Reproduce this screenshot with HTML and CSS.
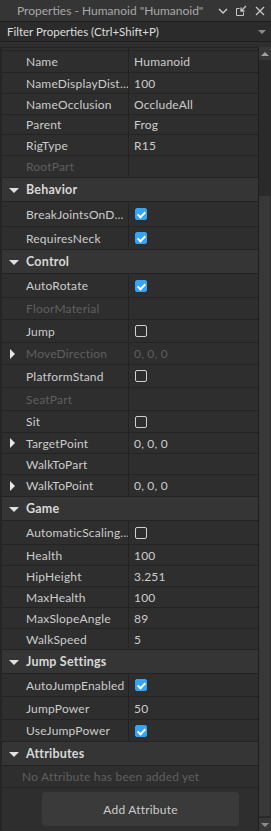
FILE: index.html
```html
<!DOCTYPE html>
<html lang="en">
<head>
    <meta charset="UTF-8">
    <title>Properties</title>
    <link rel="stylesheet" href="styles.css">
</head>
<body>
    <div class="panel">
        <div class="titlebar">
            <span class="title">Properties - Humanoid "Humanoid"</span>
            <div class="title-icons">
                <svg width="10" height="8" viewBox="0 0 10 8"><path d="M1 2 L5 6 L9 2" fill="none" stroke="#c8c8c8" stroke-width="1.5"/></svg>
                <svg width="11" height="11" viewBox="0 0 11 11"><path d="M0.5 3.5 H3.5 M0.5 3.5 V10.5 H7.5 V7.5" fill="none" stroke="#c8c8c8"/><path d="M10 1 L5 6 M5 2.5 V6 H8.5" fill="none" stroke="#c8c8c8" stroke-width="1.3"/></svg>
                <svg width="10" height="10" viewBox="0 0 10 10"><path d="M1 1 L9 9 M9 1 L1 9" fill="none" stroke="#c8c8c8" stroke-width="1.3"/></svg>
            </div>
        </div>
        <div class="filter">
            <span>Filter Properties (Ctrl+Shift+P)</span>
            <span class="tri-down small"></span>
        </div>
        <div class="content">
            <div class="grid">
                <div class="row strip"><div class="name"></div><div class="value"></div></div>
                <div class="row h22"><div class="name">Name</div><div class="value">Humanoid</div></div>
                <div class="row"><div class="name">NameDisplayDist...</div><div class="value">100</div></div>
                <div class="row"><div class="name">NameOcclusion</div><div class="value">OccludeAll</div></div>
                <div class="row h20"><div class="name">Parent</div><div class="value">Frog</div></div>
                <div class="row"><div class="name">RigType</div><div class="value">R15</div></div>
                <div class="row h22 off"><div class="name">RootPart</div><div class="value"></div></div>

                <div class="cat"><span class="tri-down"></span>Behavior</div>
                <div class="row h25"><div class="name">BreakJointsOnD...</div><div class="value"><span class="check on"></span></div></div>
                <div class="row h23"><div class="name">RequiresNeck</div><div class="value"><span class="check on"></span></div></div>

                <div class="cat h25"><span class="tri-down"></span>Control</div>
                <div class="row h24"><div class="name">AutoRotate</div><div class="value"><span class="check on"></span></div></div>
                <div class="row h22 off"><div class="name">FloorMaterial</div><div class="value"></div></div>
                <div class="row h23"><div class="name">Jump</div><div class="value"><span class="check"></span></div></div>
                <div class="row h22 off"><div class="name"><span class="tri-right"></span>MoveDirection</div><div class="value">0, 0, 0</div></div>
                <div class="row h23"><div class="name">PlatformStand</div><div class="value"><span class="check"></span></div></div>
                <div class="row h23 off"><div class="name">SeatPart</div><div class="value"></div></div>
                <div class="row h22"><div class="name">Sit</div><div class="value"><span class="check"></span></div></div>
                <div class="row"><div class="name"><span class="tri-right"></span>TargetPoint</div><div class="value">0, 0, 0</div></div>
                <div class="row"><div class="name">WalkToPart</div><div class="value"></div></div>
                <div class="row h22"><div class="name"><span class="tri-right"></span>WalkToPoint</div><div class="value">0, 0, 0</div></div>

                <div class="cat"><span class="tri-down"></span>Game</div>
                <div class="row h24"><div class="name">AutomaticScaling...</div><div class="value"><span class="check"></span></div></div>
                <div class="row"><div class="name">Health</div><div class="value">100</div></div>
                <div class="row"><div class="name">HipHeight</div><div class="value">3.251</div></div>
                <div class="row"><div class="name">MaxHealth</div><div class="value">100</div></div>
                <div class="row"><div class="name">MaxSlopeAngle</div><div class="value">89</div></div>
                <div class="row"><div class="name">WalkSpeed</div><div class="value">5</div></div>

                <div class="cat h25"><span class="tri-down"></span>Jump Settings</div>
                <div class="row h23"><div class="name">AutoJumpEnabled</div><div class="value"><span class="check on"></span></div></div>
                <div class="row h23"><div class="name">JumpPower</div><div class="value">50</div></div>
                <div class="row h22"><div class="name">UseJumpPower</div><div class="value"><span class="check on"></span></div></div>

                <div class="cat h25"><span class="tri-down"></span>Attributes</div>
                <div class="empty">No Attribute has been added yet</div>
                <div class="add-area">
                    <button class="add-button">Add Attribute</button>
                </div>
            </div>
            <div class="scrollbar">
                <div class="arrow"><span class="tri-up"></span></div>
                <div class="track"></div>
                <div class="thumb"></div>
                <div class="arrow"><span class="tri-down small"></span></div>
            </div>
        </div>
    </div>
</body>
</html>
```
FILE: styles.css
```css
* {
    margin: 0;
    padding: 0;
    box-sizing: border-box;
}

body {
    background-color: #2e2e2e;
    font-family: 'Lato', sans-serif;
    font-size: 12px;
    letter-spacing: 0.2px;
    color: #cccccc;
    width: 271px;
    height: 831px;
    overflow: hidden;
}

.panel {
    display: flex;
    flex-direction: column;
    height: 831px;
}

.titlebar {
    height: 21px;
    background-color: #353535;
    display: flex;
    align-items: center;
    justify-content: space-between;
    padding: 0 6px 0 17px;
}

.title {
    color: #a8a8a8;
    font-size: 12px;
    letter-spacing: 0;
    white-space: nowrap;
}

.title-icons {
    display: flex;
    align-items: center;
    gap: 8px;
}

.title-icons svg {
    display: block;
}

.filter {
    height: 21px;
    background-color: #2b2b2b;
    border-top: 1px solid #1e1e1e;
    border-bottom: 1px solid #1e1e1e;
    display: flex;
    align-items: center;
    justify-content: space-between;
    padding: 0 5px 0 7px;
    color: #dddddd;
    font-size: 11.5px;
    letter-spacing: 0;
    white-space: nowrap;
}

.content {
    display: flex;
    flex: 1;
    padding-top: 5px;
    min-height: 0;
}

.grid {
    flex: 1;
    border-left: 2px solid #252525;
    border-right: 1px solid #1e1e1e;
    display: flex;
    flex-direction: column;
}

.row {
    display: flex;
    height: 21px;
    border-bottom: 1px solid #232323;
    background-color: #2e2e2e;
}

.row.strip {
    height: 4px;
    border-top: 1px solid #232323;
}

.h20 { height: 20px; }
.h22 { height: 22px; }
.h23 { height: 23px; }
.h24 { height: 24px; }
.h25 { height: 25px; }

.name {
    width: 127px;
    border-right: 1px solid #232323;
    display: flex;
    align-items: center;
    padding-left: 24px;
    position: relative;
    white-space: nowrap;
    overflow: hidden;
}

.value {
    flex: 1;
    display: flex;
    align-items: center;
    padding-left: 5px;
    white-space: nowrap;
}

.off .name,
.off .value {
    color: #5f5f5f;
}

.cat {
    height: 24px;
    background-color: #353535;
    border-bottom: 1px solid #232323;
    display: flex;
    align-items: center;
    padding-left: 24px;
    font-weight: bold;
    font-size: 12.5px;
    color: #d8d8d8;
    position: relative;
}

.tri-down {
    position: absolute;
    left: 7px;
    top: 50%;
    margin-top: -2px;
    width: 0;
    height: 0;
    border-left: 5px solid transparent;
    border-right: 5px solid transparent;
    border-top: 5px solid #e0e0e0;
}

.tri-down.small {
    position: static;
    margin-top: 0;
    border-left-width: 4px;
    border-right-width: 4px;
    border-top: 4px solid #8a8a8a;
}

.tri-right {
    position: absolute;
    left: 8px;
    top: 50%;
    margin-top: -5px;
    width: 0;
    height: 0;
    border-top: 5px solid transparent;
    border-bottom: 5px solid transparent;
    border-left: 5px solid #e8e8e8;
}

.tri-up {
    width: 0;
    height: 0;
    border-left: 4px solid transparent;
    border-right: 4px solid transparent;
    border-bottom: 4px solid #a0a0a0;
}

.check {
    width: 12px;
    height: 12px;
    margin-left: 1px;
    border: 1px solid #d0d0d0;
    border-radius: 2px;
    position: relative;
}

.check.on {
    background-color: #35a4f4;
    border-color: #35a4f4;
}

.check.on::after {
    content: '';
    position: absolute;
    left: 3px;
    top: 1px;
    width: 3px;
    height: 6px;
    border-right: 2px solid #ffffff;
    border-bottom: 2px solid #ffffff;
    transform: rotate(45deg);
}

.empty {
    height: 22px;
    border-bottom: 1px solid #232323;
    display: flex;
    align-items: center;
    padding-left: 20px;
    color: #5f5f5f;
}

.add-area {
    flex: 1;
    padding: 4px 18px 0 40px;
}

.add-button {
    width: 197px;
    height: 34px;
    border: none;
    border-radius: 3px;
    background-color: #3a3a3a;
    color: #cccccc;
    font-family: 'Lato', sans-serif;
    font-size: 12px;
    letter-spacing: 0.2px;
}

.scrollbar {
    width: 12px;
    display: flex;
    flex-direction: column;
    background-color: #2a2a2a;
}

.scrollbar .arrow {
    height: 13px;
    display: flex;
    align-items: center;
    justify-content: center;
    background-color: #383838;
}

.track {
    height: 136px;
}

.thumb {
    flex: 1;
    background-color: #383838;
    margin: 0 1px 2px 0;
}
```
